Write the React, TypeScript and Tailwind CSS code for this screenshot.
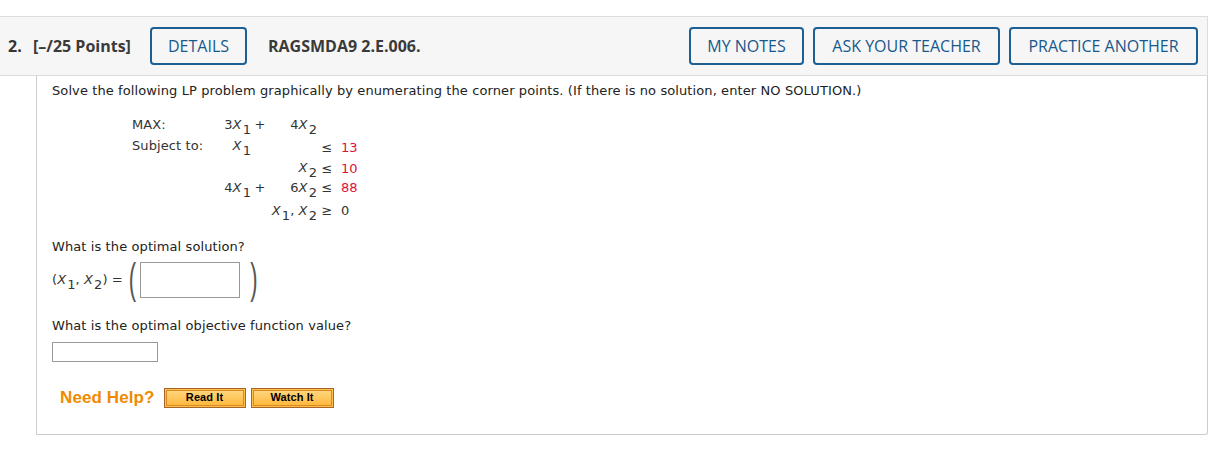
import React from "react";

const Xs = ({ n }: { n: string }) => (
  <span className="whitespace-nowrap">
    <i>X</i>
    <span className="relative top-[5px] ml-[1px] text-[13px]">{n}</span>
  </span>
);

const HBtn = ({ children, w }: { children: React.ReactNode; w: string }) => (
  <div
    className={`h-[38px] ${w} flex items-center justify-center border-2 border-[#1b5f95] rounded-[4px] text-[16px] text-[#17598c] bg-[#f6f6f6]`}
  >
    {children}
  </div>
);

const OBtn = ({ children, w }: { children: React.ReactNode; w: string }) => (
  <div
    className={`h-[20px] ${w} border border-[#a8652a] bg-[#ffbf48] p-[1px] flex`}
  >
    <div className="flex-1 flex items-center justify-center border border-[#d98a26] bg-gradient-to-b from-[#ffd57a] to-[#ffb93c] text-[11px] font-bold text-black font-['Liberation_Sans',Arial,sans-serif] leading-none">
      {children}
    </div>
  </div>
);

export default function App() {
  return (
    <div className="w-[1221px] h-[459px] bg-white font-['DejaVu_Sans',Verdana,sans-serif] text-[#333]">
      <div className="h-[16px]" />
      {/* header */}
      <div className="w-[1208px] h-[60px] bg-[#f6f6f6] border-t border-r border-b border-[#dcdcdc] flex items-center font-['Open_Sans',sans-serif] text-[#333]">
        <div className="pl-[8px] text-[16px] font-bold w-[33px]">2.</div>
        <div className="text-[16px] font-bold text-[#3a3a3a] w-[117px]">[–/25 Points]</div>
        <HBtn w="w-[97px]">DETAILS</HBtn>
        <div className="ml-[21px] text-[16px] font-bold text-[#3a3a3a]">RAGSMDA9 2.E.006.</div>
        <div className="flex-1" />
        <div className="flex gap-[9px] pr-[9px]">
          <HBtn w="w-[115px]">MY NOTES</HBtn>
          <HBtn w="w-[187px]">ASK YOUR TEACHER</HBtn>
          <HBtn w="w-[189px]">PRACTICE ANOTHER</HBtn>
        </div>
      </div>
      {/* body */}
      <div className="ml-[36px] w-[1172px] h-[359px] border-l border-r border-b border-[#cccccc] rounded-br-[3px] pl-[15px] text-[13px] tracking-[0.1px] text-[#222]">
        <div className="pt-[6px] leading-[18px]">
          Solve the following LP problem graphically by enumerating the corner points. (If there is no solution, enter NO SOLUTION.)
        </div>
        <div className="mt-[17px] ml-[80px] grid grid-cols-[87px_32px_18px_48px_20px_auto] auto-rows-[21px] leading-[16px] text-[#333]">
          <div>MAX:</div>
          <div className="text-right whitespace-nowrap">3<Xs n="1" /></div>
          <div className="text-center">+</div>
          <div className="text-right whitespace-nowrap">4<Xs n="2" /></div>
          <div />
          <div />

          <div>Subject to:</div>
          <div className="text-right"><Xs n="1" /></div>
          <div />
          <div />
          <div className="text-center pt-[2px]">≤</div>
          <div className="pl-[4px] pt-[2px] text-[#e0103c]">13</div>

          <div />
          <div />
          <div />
          <div className="text-right pt-[1px]"><Xs n="2" /></div>
          <div className="text-center pt-[2px]">≤</div>
          <div className="pl-[4px] pt-[2px] text-[#e0103c]">10</div>

          <div />
          <div className="text-right whitespace-nowrap">4<Xs n="1" /></div>
          <div className="text-center">+</div>
          <div className="text-right whitespace-nowrap">6<Xs n="2" /></div>
          <div className="text-center">≤</div>
          <div className="pl-[4px] text-[#e0103c]">88</div>

          <div />
          <div className="col-span-3 text-right pt-[2px] whitespace-nowrap"><Xs n="1" />, <Xs n="2" /></div>
          <div className="text-center pt-[2px]">≥</div>
          <div className="pl-[4px] pt-[2px]">0</div>
        </div>

        <div className="mt-[16px] leading-[18px]">What is the optimal solution?</div>
        <div className="mt-[4px] flex items-center h-[40px]">
          <span className="text-[#333] whitespace-nowrap">(<Xs n="1" />, <Xs n="2" />) =</span>
          <span className="ml-[6px] inline-block scale-y-[1.9] text-[22px] font-['Liberation_Sans',sans-serif] text-[#555] leading-none">(</span>
          <div className="ml-[4px] w-[100px] h-[36px] border border-[#999] bg-white" />
          <span className="ml-[10px] inline-block scale-y-[1.9] text-[22px] font-['Liberation_Sans',sans-serif] text-[#555] leading-none">)</span>
        </div>
        <div className="mt-[17px] leading-[18px]">What is the optimal objective function value?</div>
        <div className="mt-[7px] w-[106px] h-[20px] border border-[#999] bg-white" />

        <div className="mt-[23px] ml-[8px] flex items-center">
          <span className="text-[17px] font-bold text-[#f08a00] font-['Liberation_Sans',Arial,sans-serif] mr-[9px]">Need Help?</span>
          <OBtn w="w-[82px]">Read It</OBtn>
          <div className="w-[5px]" />
          <OBtn w="w-[83px]">Watch It</OBtn>
        </div>
      </div>
    </div>
  );
}
